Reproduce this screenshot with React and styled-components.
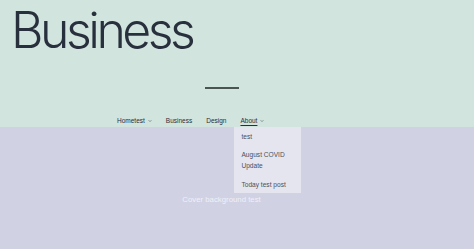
import React from 'react';
import styled, { createGlobalStyle } from 'styled-components';

const Global = createGlobalStyle`
  html, body { margin: 0; padding: 0; }
  body {
    font-family: "Liberation Sans", Arial, sans-serif;
    background: #d1d1e4;
    width: 474px;
    height: 249px;
    overflow: hidden;
  }
`;

const Page = styled.div`
  display: flex;
  flex-direction: column;
  height: 249px;
`;

const Header = styled.header`
  background: #d1e4dd;
  height: 127px;
  display: flex;
  flex-direction: column;
  padding-right: 31px;
  box-sizing: border-box;
`;

const Title = styled.h1`
  margin: 0;
  padding: 0 0 0 11px;
  font-family: Inter, "Liberation Sans", sans-serif;
  font-size: 50px;
  font-weight: 300;
  line-height: 60px;
  letter-spacing: -0.07em;
  color: #28303d;
`;

const Separator = styled.hr`
  align-self: center;
  width: 34px;
  height: 2px;
  margin: 27px 0 0 0;
  border: none;
  background: #4a5551;
`;

const Nav = styled.nav`
  display: flex;
  gap: 14px;
  margin-top: 27px;
  padding-left: 117px;
`;

const NavItem = styled.div`
  position: relative;
  font-size: 6.5px;
  line-height: 10px;
  color: #28303d;
  display: flex;
  align-items: center;
  gap: 3px;
`;

const Label = styled.span`
  text-decoration: ${(p) => (p.$current ? 'underline' : 'none')};
  text-decoration-thickness: 1px;
  text-underline-offset: 1.5px;
`;

const Chevron = styled.svg`
  width: 4px;
  height: 4px;
`;

const Dropdown = styled.ul`
  position: absolute;
  top: 11px;
  left: -6px;
  width: 67px;
  margin: 0;
  padding: 3.5px 0;
  list-style: none;
  background: #e5e5ef;
  display: flex;
  flex-direction: column;
  gap: 7.5px;
  z-index: 2;
`;

const DropItem = styled.li`
  font-size: 6.6px;
  line-height: 11px;
  color: #4b515b;
  padding: 0 7px;
`;

const Cover = styled.section`
  flex: 1;
  background: #d1d1e4;
  display: flex;
  justify-content: center;
  padding: 68px 31px 0 0;
`;

const CoverText = styled.p`
  margin: 0;
  font-size: 7.8px;
  line-height: 10px;
  color: #eef0f7;
`;

const Down = () => (
  <Chevron viewBox="0 0 10 10">
    <path d="M1.5 3 L5 6.5 L8.5 3" fill="none" stroke="#4b515b" strokeWidth="1.4" />
  </Chevron>
);

export default function App() {
  return (
    <Page>
      <Global />
      <Header>
        <Title>Business</Title>
        <Separator />
        <Nav>
          <NavItem>Hometest <Down /></NavItem>
          <NavItem>Business</NavItem>
          <NavItem>Design</NavItem>
          <NavItem>
            <Label $current>About</Label>
            <Down />
            <Dropdown>
              <DropItem>test</DropItem>
              <DropItem>August COVID<br />Update</DropItem>
              <DropItem>Today test post</DropItem>
            </Dropdown>
          </NavItem>
        </Nav>
      </Header>
      <Cover>
        <CoverText>Cover background test</CoverText>
      </Cover>
    </Page>
  );
}
